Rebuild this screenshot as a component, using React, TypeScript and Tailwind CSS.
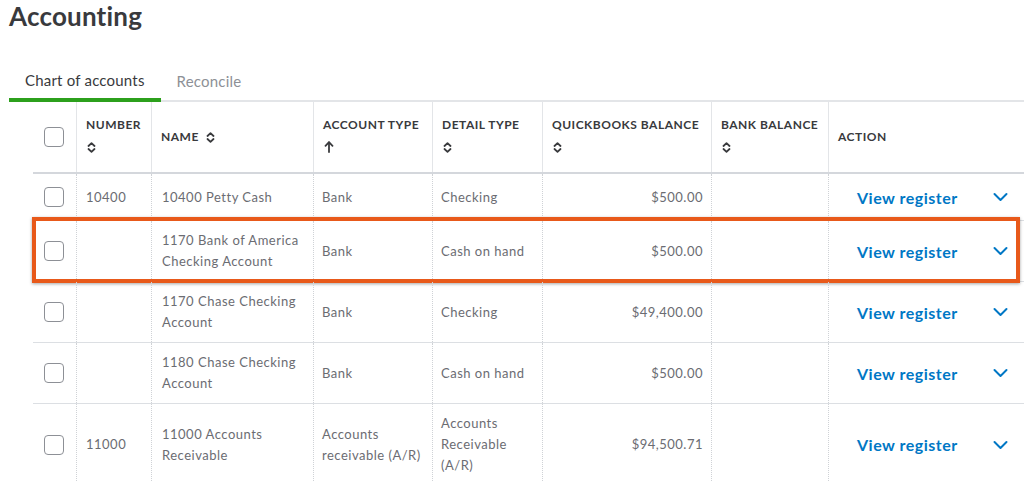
import React from 'react';

const cols = 'grid grid-cols-[43px_75px_162px_119px_110px_169px_117px_1fr]';

const rows = [
    { num: '10400', name: ['10400 Petty Cash'], type: ['Bank'], detail: ['Checking'], qb: '$500.00' },
    { num: '', name: ['1170 Bank of America', 'Checking Account'], type: ['Bank'], detail: ['Cash on hand'], qb: '$500.00', marked: true },
    { num: '', name: ['1170 Chase Checking', 'Account'], type: ['Bank'], detail: ['Checking'], qb: '$49,400.00' },
    { num: '', name: ['1180 Chase Checking', 'Account'], type: ['Bank'], detail: ['Cash on hand'], qb: '$500.00' },
    { num: '11000', name: ['11000 Accounts', 'Receivable'], type: ['Accounts', 'receivable (A/R)'], detail: ['Accounts', 'Receivable', '(A/R)'], qb: '$94,500.71' },
];

function SortIcon() {
    return (
        <svg width="9" height="11" viewBox="0 0 9 11" fill="none" stroke="#393a3d" strokeWidth="1.8" strokeLinecap="round" strokeLinejoin="round">
            <path d="M1.5 4 L4.5 1.2 L7.5 4" />
            <path d="M1.5 7 L4.5 9.8 L7.5 7" />
        </svg>
    );
}

function ArrowUp() {
    return (
        <svg width="10" height="12" viewBox="0 0 10 12" fill="none" stroke="#393a3d" strokeWidth="1.8" strokeLinecap="round" strokeLinejoin="round">
            <path d="M5 11 L5 1.5" />
            <path d="M1.5 4.8 L5 1.2 L8.5 4.8" />
        </svg>
    );
}

function Checkbox() {
    return <div className="w-[20px] h-[20px] rounded-[4px] border border-[#8d9096] bg-white" />;
}

function HeadCell({ label, icon, inline }: { label: string; icon?: React.ReactNode; inline?: boolean }) {
    if (inline) {
        return (
            <div className="border-l border-[#e3e5e8] px-[9px] flex items-center">
                <div className="flex items-center gap-[7px] leading-[16px]">
                    <span>{label}</span>
                    {icon}
                </div>
            </div>
        );
    }
    return (
        <div className={`border-l border-[#e3e5e8] px-[9px] flex flex-col justify-center ${icon ? 'pb-[5px]' : ''}`}>
            <div className="leading-[16px] whitespace-nowrap">{label}</div>
            {icon && <div className="mt-[9px] h-[11px] flex items-center pl-[1px]">{icon}</div>}
        </div>
    );
}

function Lines({ lines }: { lines: string[] }) {
    return (
        <>
            {lines.map((l, i) => (
                <div key={i} className="whitespace-nowrap">{l}</div>
            ))}
        </>
    );
}

export default function App() {
    return (
        <div className="w-[1024px] h-[481px] overflow-hidden bg-white font-['Lato',sans-serif] pl-[9px]">
            <h1 className="text-[26px] leading-[32px] font-bold text-[#393a3d] tracking-[0.2px]">Accounting</h1>

            <div className="mt-[30px] h-[40px] flex border-b-2 border-[#e3e5e8] text-[15px] tracking-[0.2px]">
                <div className="px-4 flex items-center border-b-4 border-[#2ca01c] -mb-[2px] text-[#393a3d]">Chart of accounts</div>
                <div className="px-4 flex items-center text-[#8d9096]">Reconcile</div>
            </div>

            <div className="ml-[24px]">
                <div className={`${cols} h-[72px] border-b-2 border-[#d4d7dc] text-[12px] font-bold text-[#393a3d] uppercase tracking-[0.5px]`}>
                    <div className="flex items-center pl-[11px]">
                        <Checkbox />
                    </div>
                    <HeadCell label="Number" icon={<SortIcon />} />
                    <HeadCell label="Name" icon={<SortIcon />} inline />
                    <HeadCell label="Account type" icon={<ArrowUp />} />
                    <HeadCell label="Detail type" icon={<SortIcon />} />
                    <HeadCell label="QuickBooks balance" icon={<SortIcon />} />
                    <HeadCell label="Bank balance" icon={<SortIcon />} />
                    <HeadCell label="Action" />
                </div>

                {rows.map((r, i) => (
                    <div key={i} className={`relative ${cols} border-b border-[#dcdfe3] text-[13px] leading-[21px] text-[#6b6c72] tracking-[0.5px]`}>
                        <div className="flex items-center pl-[11px] min-h-[46px]">
                            <Checkbox />
                        </div>
                        <div className="border-l border-dotted border-[#cfd2d6] px-[9px] py-[9px] flex items-center">{r.num}</div>
                        <div className="border-l border-dotted border-[#cfd2d6] px-[10px] py-[9px] flex flex-col justify-center">
                            <Lines lines={r.name} />
                        </div>
                        <div className="border-l border-dotted border-[#cfd2d6] px-[8px] py-[9px] flex flex-col justify-center">
                            <Lines lines={r.type} />
                        </div>
                        <div className="border-l border-dotted border-[#cfd2d6] px-[8px] py-[9px] flex flex-col justify-center">
                            <Lines lines={r.detail} />
                        </div>
                        <div className="border-l border-dotted border-[#cfd2d6] px-[8px] py-[9px] flex items-center justify-end">{r.qb}</div>
                        <div className="border-l border-dotted border-[#cfd2d6]" />
                        <div className="border-l border-dotted border-[#cfd2d6] flex items-center pl-[28px] pr-[16px]">
                            <span className="text-[16px] font-bold text-[#0077c5] tracking-[0.5px]">View register</span>
                            <svg className="ml-auto" width="15" height="10" viewBox="0 0 15 10" fill="none" stroke="#0077c5" strokeWidth="2" strokeLinecap="round" strokeLinejoin="round">
                                <path d="M1.5 2 L7.5 8 L13.5 2" />
                            </svg>
                        </div>
                        {r.marked && (
                            <div className="absolute -left-[1px] -top-[4px] right-[4px] -bottom-[2px] border-4 border-[#e8591a] shadow-[0_1px_3px_rgba(0,0,0,0.35)] pointer-events-none" />
                        )}
                    </div>
                ))}
            </div>
        </div>
    );
}
